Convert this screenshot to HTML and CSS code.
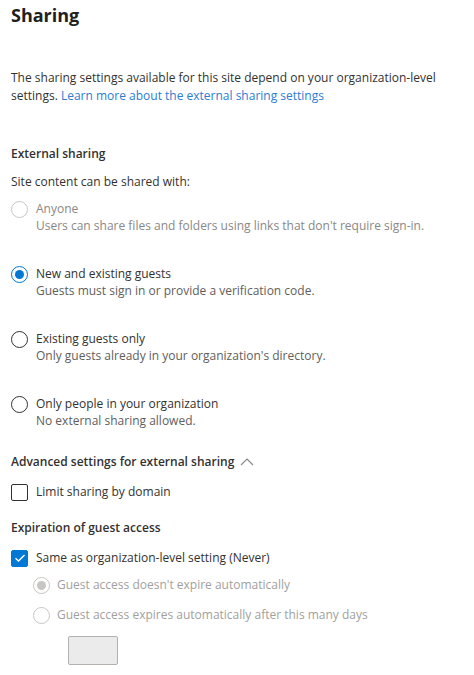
FILE: index.html
```html
<!DOCTYPE html>
<html lang="en">
<head>
    <meta charset="UTF-8">
    <meta name="viewport" content="width=device-width, initial-scale=1.0">
    <title>Sharing</title>
    <link rel="stylesheet" href="styles.css">
</head>
<body>
    <div class="panel">
        <h2 class="title">Sharing</h2>

        <p class="intro">
            The sharing settings available for this site depend on your organization-level
            settings. <a href="#">Learn more about the external sharing settings</a>
        </p>

        <h3 class="section">External sharing</h3>
        <div class="hint">Site content can be shared with:</div>

        <div class="choices">
            <div class="choice disabled">
                <span class="radio"></span>
                <div class="choice-text">
                    <div class="choice-label">Anyone</div>
                    <div class="choice-desc">Users can share files and folders using links that don't require sign-in.</div>
                </div>
            </div>
            <div class="choice">
                <span class="radio checked"></span>
                <div class="choice-text">
                    <div class="choice-label">New and existing guests</div>
                    <div class="choice-desc">Guests must sign in or provide a verification code.</div>
                </div>
            </div>
            <div class="choice">
                <span class="radio"></span>
                <div class="choice-text">
                    <div class="choice-label">Existing guests only</div>
                    <div class="choice-desc">Only guests already in your organization's directory.</div>
                </div>
            </div>
            <div class="choice">
                <span class="radio"></span>
                <div class="choice-text">
                    <div class="choice-label">Only people in your organization</div>
                    <div class="choice-desc">No external sharing allowed.</div>
                </div>
            </div>
        </div>

        <div class="toggle">
            Advanced settings for external sharing
            <svg class="chevron" width="14" height="10" viewBox="0 0 14 10">
                <path d="M1 8 L7 2 L13 8" fill="none" stroke="#8a8886" stroke-width="1.2"/>
            </svg>
        </div>

        <label class="check">
            <span class="box"></span>
            Limit sharing by domain
        </label>

        <h3 class="section expiry">Expiration of guest access</h3>

        <label class="check">
            <span class="box checked">
                <svg width="12" height="10" viewBox="0 0 12 10">
                    <path d="M1.5 5.2 L4.5 8 L10.5 2" fill="none" stroke="#fff" stroke-width="1.4"/>
                </svg>
            </span>
            Same as organization-level setting (Never)
        </label>

        <div class="sub-choices">
            <div class="sub-choice">
                <span class="radio dim-checked"></span>
                Guest access doesn't expire automatically
            </div>
            <div class="sub-choice">
                <span class="radio dim"></span>
                Guest access expires automatically after this many days
            </div>
            <div class="days-input"></div>
        </div>
    </div>
</body>
</html>
```

FILE: styles.css
```css
body {
    margin: 0;
    padding: 0;
    background: #fff;
    font-family: 'Segoe UI', 'Open Sans', sans-serif;
    font-size: 12px;
    color: #323130;
}
.panel {
    padding: 0 11px;
}
.title {
    font-size: 18px;
    font-weight: 700;
    line-height: 28px;
    margin: 1px 0 0;
    color: #201f1e;
}
.intro {
    line-height: 18px;
    margin: 40px 0 0;
}
.intro a {
    color: #2b7cd3;
    text-decoration: none;
}
.section {
    font-size: 12px;
    font-weight: 600;
    line-height: 18px;
    margin: 40px 0 0;
}
.hint {
    line-height: 18px;
    margin-top: 10px;
}
.choices {
    display: flex;
    flex-direction: column;
    gap: 31px;
    margin-top: 9px;
}
.choice {
    display: flex;
    gap: 8px;
    align-items: flex-start;
}
.choice-text {
    line-height: 17px;
}
.choice-desc {
    color: #605e5c;
}
.choice.disabled .choice-label,
.choice.disabled .choice-desc {
    color: #8a8886;
}
.radio {
    width: 17px;
    height: 17px;
    box-sizing: border-box;
    border: 1px solid #323130;
    border-radius: 50%;
    flex-shrink: 0;
    position: relative;
    margin-top: 1px;
}
.choice.disabled .radio {
    border-color: #c8c6c4;
}
.radio.checked {
    border-color: #0078d4;
}
.radio.checked::after,
.radio.dim-checked::after {
    content: "";
    position: absolute;
    left: 3px;
    top: 3px;
    width: 9px;
    height: 9px;
    border-radius: 50%;
    background: #0078d4;
}
.toggle {
    display: flex;
    align-items: center;
    gap: 6px;
    font-weight: 600;
    line-height: 18px;
    margin-top: 24px;
}
.check {
    display: flex;
    align-items: center;
    gap: 8px;
    line-height: 18px;
    margin-top: 12px;
}
.box {
    width: 17px;
    height: 17px;
    box-sizing: border-box;
    border: 1px solid #323130;
    border-radius: 2px;
    display: flex;
    align-items: center;
    justify-content: center;
}
.box.checked {
    background: #0078d4;
    border-color: #0078d4;
}
.section.expiry {
    margin-top: 18px;
}
.sub-choices {
    display: flex;
    flex-direction: column;
    padding-left: 22px;
    margin-top: 9px;
}
.sub-choice {
    display: flex;
    align-items: center;
    gap: 7px;
    line-height: 18px;
    color: #a19f9d;
}
.sub-choice + .sub-choice {
    margin-top: 12px;
}
.sub-choice .radio {
    margin-top: 0;
}
.radio.dim,
.radio.dim-checked {
    border-color: #c8c6c4;
}
.radio.dim-checked::after {
    background: #c8c6c4;
}
.days-input {
    width: 48px;
    height: 27px;
    margin: 12px 0 0 35px;
    background: #ebebeb;
    border: 1px solid #b3b0ad;
    border-radius: 2px;
}
```
